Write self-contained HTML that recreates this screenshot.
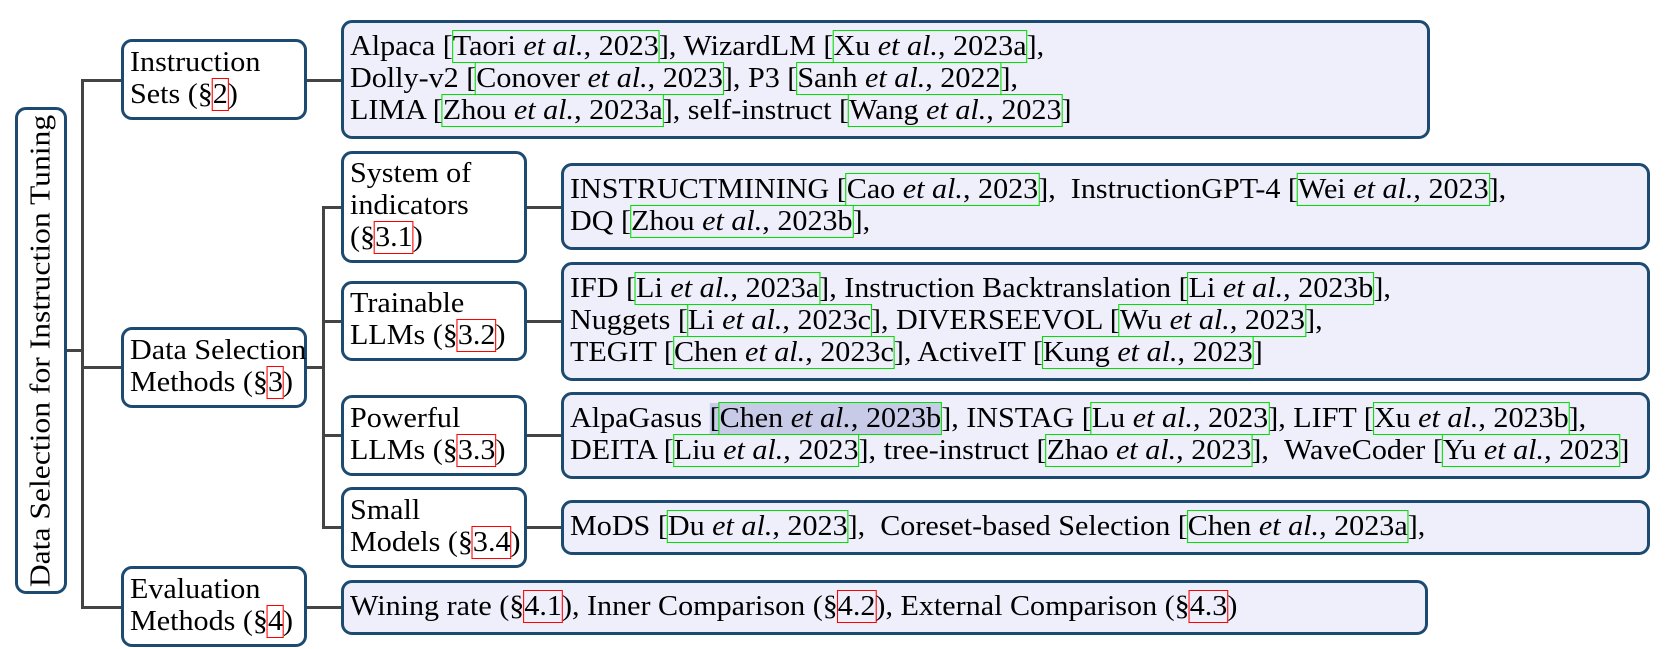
<!DOCTYPE html>
<html><head><meta charset="utf-8"><style>
html,body{margin:0;padding:0;background:#fff;}
body{width:1668px;height:649px;position:relative;overflow:hidden;font-family:"Liberation Serif","DejaVu Serif",serif;font-size:28px;color:#000;}
.b{position:absolute;box-sizing:border-box;border:3px solid #1d4a70;border-radius:11px;background:#fff;display:flex;align-items:center;padding:0 6px;line-height:32px;white-space:nowrap;font-family:"Liberation Serif","DejaVu Serif",serif;}
.b>div{transform:scaleX(1.075);transform-origin:0 50%;margin-top:-2px;}
.f{background:#efeffc;}
.l{position:absolute;background:#444;}
.g{outline:1px solid #00e000;}
.r{outline:1px solid #f00;}
.hl{background:#c8cbe8;}
i{font-style:italic;font-family:"Liberation Serif","DejaVu Serif",serif;}
.root{flex-direction:column;justify-content:center;padding:0;}
.root span{display:block;transform:rotate(-90deg) scaleX(1.09);white-space:nowrap;font-size:29px;}
</style></head><body>
<div class="l" style="left:67px;top:349px;width:16px;height:3px"></div>
<div class="l" style="left:81px;top:79px;width:3px;height:530px"></div>
<div class="l" style="left:81px;top:79px;width:40px;height:3px"></div>
<div class="l" style="left:81px;top:366px;width:40px;height:3px"></div>
<div class="l" style="left:81px;top:606px;width:40px;height:3px"></div>
<div class="l" style="left:307px;top:79px;width:34px;height:3px"></div>
<div class="l" style="left:307px;top:606px;width:34px;height:3px"></div>
<div class="l" style="left:307px;top:366px;width:16px;height:3px"></div>
<div class="l" style="left:322px;top:206px;width:3px;height:323px"></div>
<div class="l" style="left:322px;top:206px;width:20px;height:3px"></div>
<div class="l" style="left:322px;top:320px;width:20px;height:3px"></div>
<div class="l" style="left:322px;top:434px;width:20px;height:3px"></div>
<div class="l" style="left:322px;top:526px;width:20px;height:3px"></div>
<div class="l" style="left:527px;top:206px;width:35px;height:3px"></div>
<div class="l" style="left:527px;top:320px;width:35px;height:3px"></div>
<div class="l" style="left:527px;top:434px;width:35px;height:3px"></div>
<div class="l" style="left:527px;top:526px;width:35px;height:3px"></div>

<div class="b root" style="left:15px;top:107px;width:52px;height:487px"><span>Data Selection for Instruction Tuning</span></div>

<div class="b" style="left:121px;top:39px;width:186px;height:81px"><div>Instruction<br>Sets (§<span class="r">2</span>)</div></div>
<div class="b" style="left:121px;top:327px;width:186px;height:81px"><div>Data Selection<br>Methods (§<span class="r">3</span>)</div></div>
<div class="b" style="left:121px;top:566px;width:186px;height:81px"><div>Evaluation<br>Methods (§<span class="r">4</span>)</div></div>

<div class="b f" style="left:341px;top:20px;width:1089px;height:119px"><div>Alpaca [<span class="g">Taori <i>et al.</i>, 2023</span>], WizardLM [<span class="g">Xu <i>et al.</i>, 2023a</span>],<br>Dolly-v2 [<span class="g">Conover <i>et al.</i>, 2023</span>], P3 [<span class="g">Sanh <i>et al.</i>, 2022</span>],<br>LIMA [<span class="g">Zhou <i>et al.</i>, 2023a</span>], self-instruct [<span class="g">Wang <i>et al.</i>, 2023</span>]</div></div>

<div class="b" style="left:341px;top:151px;width:186px;height:112px"><div>System of<br>indicators<br>(§<span class="r">3.1</span>)</div></div>
<div class="b" style="left:341px;top:281px;width:186px;height:80px"><div>Trainable<br>LLMs (§<span class="r">3.2</span>)</div></div>
<div class="b" style="left:341px;top:395px;width:186px;height:81px"><div>Powerful<br>LLMs (§<span class="r">3.3</span>)</div></div>
<div class="b" style="left:341px;top:487px;width:186px;height:81px"><div>Small<br>Models (§<span class="r">3.4</span>)</div></div>

<div class="b f" style="left:561px;top:163px;width:1089px;height:87px"><div>INSTRUCTMINING [<span class="g">Cao <i>et al.</i>, 2023</span>], &nbsp;InstructionGPT-4 [<span class="g">Wei <i>et al.</i>, 2023</span>],<br>DQ [<span class="g">Zhou <i>et al.</i>, 2023b</span>],</div></div>
<div class="b f" style="left:561px;top:262px;width:1089px;height:119px"><div>IFD [<span class="g">Li <i>et al.</i>, 2023a</span>], Instruction Backtranslation [<span class="g">Li <i>et al.</i>, 2023b</span>],<br>Nuggets [<span class="g">Li <i>et al.</i>, 2023c</span>], DIVERSEEVOL [<span class="g">Wu <i>et al.</i>, 2023</span>],<br>TEGIT [<span class="g">Chen <i>et al.</i>, 2023c</span>], ActiveIT [<span class="g">Kung <i>et al.</i>, 2023</span>]</div></div>
<div class="b f" style="left:561px;top:392px;width:1089px;height:87px"><div>AlpaGasus <span class="hl">[<span class="g">Chen <i>et al.</i>, 2023b</span></span>], INSTAG [<span class="g">Lu <i>et al.</i>, 2023</span>], LIFT [<span class="g">Xu <i>et al.</i>, 2023b</span>],<br>DEITA [<span class="g">Liu <i>et al.</i>, 2023</span>], tree-instruct [<span class="g">Zhao <i>et al.</i>, 2023</span>], &nbsp;WaveCoder [<span class="g">Yu <i>et al.</i>, 2023</span>]</div></div>
<div class="b f" style="left:561px;top:500px;width:1089px;height:55px"><div>MoDS [<span class="g">Du <i>et al.</i>, 2023</span>], &nbsp;Coreset-based Selection [<span class="g">Chen <i>et al.</i>, 2023a</span>],</div></div>

<div class="b f" style="left:341px;top:580px;width:1087px;height:55px"><div>Wining rate (§<span class="r">4.1</span>), Inner Comparison (§<span class="r">4.2</span>), External Comparison (§<span class="r">4.3</span>)</div></div>
</body></html>
